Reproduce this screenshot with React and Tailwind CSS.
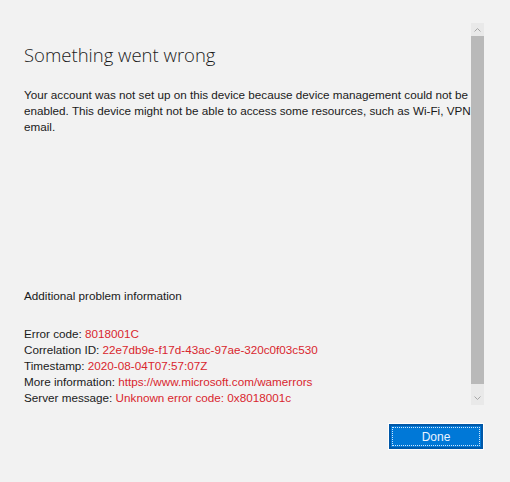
export default function App() {
  const rows = [
    ['Error code: ', '8018001C'],
    ['Correlation ID: ', '22e7db9e-f17d-43ac-97ae-320c0f03c530'],
    ['Timestamp: ', '2020-08-04T07:57:07Z'],
    ['More information: ', 'https://www.microsoft.com/wamerrors'],
    ['Server message: ', 'Unknown error code: 0x8018001c'],
  ]

  return (
    <div
      className="w-[510px] h-[482px] bg-[#f2f2f2] text-[#1a1a1a] flex flex-col overflow-hidden"
      style={{ fontFamily: '"Liberation Sans", Arial, sans-serif' }}
    >
      <div className="flex pt-[23px] h-[405px]">
        <div className="flex-1 overflow-hidden">
          <div className="w-[470px] pl-[24px] pt-[18px] box-content">
            <h1
              className="text-[18.5px] leading-[28px] font-light"
              style={{ fontFamily: '"Open Sans", "Noto Sans", sans-serif' }}
            >
              Something went wrong
            </h1>
            <p className="mt-[18px] text-[11.7px] leading-[16px]">
              Your account was not set up on this device because device management could not be
              enabled. This device might not be able to access some resources, such as Wi-Fi, VPN, or
              email.
            </p>
            <p className="mt-[153px] text-[11.7px] leading-[16px]">Additional problem information</p>
            <div className="mt-[22px] text-[11.7px] leading-[16px]">
              {rows.map(([k, v]) => (
                <div key={k}>
                  {k}
                  <span className="text-[#d9262e]">{v}</span>
                </div>
              ))}
            </div>
          </div>
        </div>
        <div className="w-[13px] mr-[26px] flex flex-col bg-[#e9e9e9]">
          <div className="h-[13px] flex items-center justify-center">
            <svg width="7" height="4" viewBox="0 0 7 4">
              <path d="M0.5 3.5 L3.5 0.5 L6.5 3.5" fill="none" stroke="#a6a6a6" strokeWidth="1" />
            </svg>
          </div>
          <div className="flex-1 bg-[#b9b9b9]" />
          <div className="h-[21px] flex items-end justify-center pb-[5px]">
            <svg width="7" height="4" viewBox="0 0 7 4">
              <path d="M0.5 0.5 L3.5 3.5 L6.5 0.5" fill="none" stroke="#a6a6a6" strokeWidth="1" />
            </svg>
          </div>
        </div>
      </div>
      <div className="flex justify-end pr-[27px] pt-[19px]">
        <button className="w-[94px] h-[25px] bg-[#0078d7] border-2 border-[#0058a8] p-[1px] text-[12px] text-[#eaf4ff] outline outline-1 outline-[#ffffff]">
          <div className="w-full h-full border border-dotted border-[#cfe6fb] flex items-center justify-center">
            Done
          </div>
        </button>
      </div>
    </div>
  )
}
